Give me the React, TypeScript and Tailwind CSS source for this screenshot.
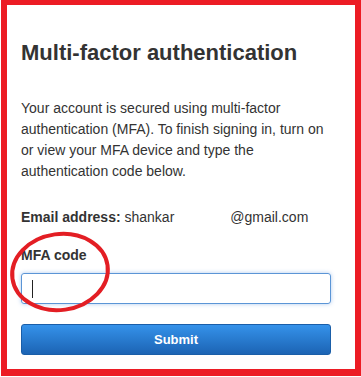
export default function App() {
  return (
    <div className="relative w-[361px] h-[377px] bg-white pl-px pb-px font-['Liberation_Sans',Arial,sans-serif]">
      <div className="h-full border-t-[5px] border-l-[6px] border-r-[6px] border-b-[7px] border-[#ec1c24] bg-white">
        <div className="h-full flex flex-col pl-[14px] pr-[24px] pt-[35px] text-[#333]">
          <h1 className="text-[22px] leading-[26px] font-bold text-[#333]">Multi-factor authentication</h1>
          <p className="mt-[32px] text-[14px] leading-[21px]">
            Your account is secured using multi-factor authentication (MFA). To finish signing in, turn on or view your
            MFA device and type the authentication code below.
          </p>
          <p className="mt-[25px] text-[14px] leading-[21px]">
            <span className="font-bold">Email address:</span> shankar<span className="inline-block w-[56px]" />@gmail.com
          </p>
          <label className="mt-[18px] text-[14px] leading-[18px] font-bold">MFA code</label>
          <div className="mt-[9px] h-[31px] rounded-[3px] border border-[#5b95d6] shadow-[0_0_4px_rgba(80,140,220,0.45)] flex items-center pl-[10px]">
            <span className="w-px h-[18px] bg-[#222]" />
          </div>
          <button className="mt-[20px] h-[31px] rounded-[3px] border border-[#1a5ea8] bg-gradient-to-b from-[#3592ea] to-[#1c64b4] text-white text-[13px] font-bold">
            Submit
          </button>
        </div>
      </div>
      <svg className="absolute left-0 top-0 pointer-events-none" width="361" height="377">
        <ellipse cx="60" cy="272" rx="48" ry="38" fill="none" stroke="#e31e24" strokeWidth="4" transform="rotate(-8 60 272)" />
      </svg>
    </div>
  )
}
